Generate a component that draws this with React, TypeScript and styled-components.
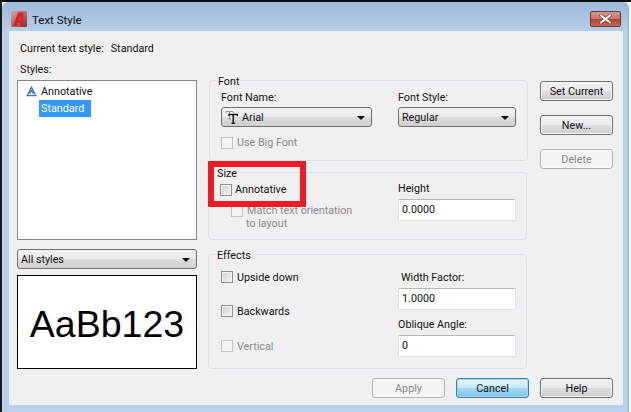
import React from 'react';
import styled, { createGlobalStyle } from 'styled-components';

const GlobalStyle = createGlobalStyle`
  html, body {
    margin: 0;
    padding: 0;
    background: #fff;
  }
  body {
    font-family: Roboto, "Liberation Sans", sans-serif;
    font-size: 10.75px;
    color: #111;
  }
`;

const Screen = styled.div`
  width: 631px;
  height: 412px;
  overflow: hidden;
  box-sizing: border-box;
  padding: 2px 2px 0 2px;
  background: linear-gradient(#0a0a0a, #0a0a0a) left top / 100% 2px no-repeat,
    linear-gradient(#1a1a1a, #1a1a1a) left top / 2px 100% no-repeat, #fff;
`;

const Win = styled.div`
  position: relative;
  height: 410px;
  box-sizing: border-box;
  padding: 0 5px 7px 7px;
  border-right: 1px solid #86b6d6;
  border-radius: 6px 6px 0 0;
  background: linear-gradient(#9cb9d9 0, #b9d1ea 32px, #b9d1ea 100%);
  display: flex;
  flex-direction: column;
`;

const TitleBar = styled.div`
  height: 29px;
  flex: none;
  display: flex;
  align-items: flex-start;
  padding: 9px 2px 0 2px;
  box-sizing: border-box;
`;

const TitleText = styled.span`
  font-size: 11.5px;
  line-height: 18px;
  margin: 0 0 0 5px;
  color: #0c0c14;
`;

const CloseBtn = styled.div`
  width: 31px;
  height: 16px;
  margin-left: auto;
  box-sizing: border-box;
  border: 1px solid #6b3a38;
  border-radius: 2px;
  background: linear-gradient(#d9978c 0, #c9756a 48%, #b4402f 52%, #c96a58 100%);
  display: flex;
  align-items: center;
  justify-content: center;
`;

const Client = styled.div`
  flex: 1;
  background: #f0f0f0;
  box-sizing: border-box;
  padding: 10px 10px 0 8px;
  display: grid;
  grid-template-columns: 180px 319px 73px;
  grid-template-rows: 14px 1fr;
  column-gap: 12px;
  row-gap: 11px;
  position: relative;
`;

const CurrentLine = styled.div`
  grid-column: 1 / 4;
  display: flex;
  gap: 7px;
  height: 14px;
  line-height: 16px;
  margin-left: 3px;
`;

const Label = styled.span<{ $disabled?: boolean; $low?: boolean }>`
  display: block;
  height: 14px;
  line-height: ${(p) => (p.$low ? '16px' : '14px')};
  white-space: nowrap;
  color: ${(p) => (p.$disabled ? '#8a8a8a' : '#111')};
`;

const LeftColumn = styled.div`
  display: flex;
  flex-direction: column;
`;

const StylesLabel = styled(Label)`
  margin: -4px 0 4px 3px;
`;

const ListBox = styled.div`
  height: 160px;
  box-sizing: border-box;
  background: #fff;
  border: 1px solid #828790;
  padding: 2px 0 0 8px;
`;

const ListRow = styled.div`
  display: flex;
  align-items: center;
  height: 17px;
`;

const RowIcon = styled.span`
  width: 13px;
  flex: none;
  display: flex;
`;

const RowText = styled.span<{ $selected?: boolean }>`
  padding: 0 ${(p) => (p.$selected ? '7px' : '0')} 0 2px;
  line-height: 17px;
  background: ${(p) => (p.$selected ? '#3399ff' : 'transparent')};
  color: ${(p) => (p.$selected ? '#fff' : '#111')};
`;

const Combo = styled.div<{ $width: number; $top?: number }>`
  width: ${(p) => p.$width}px;
  height: 20px;
  margin-top: ${(p) => p.$top ?? 0}px;
  box-sizing: border-box;
  border: 1px solid #707070;
  border-radius: 3px;
  background: linear-gradient(#f2f2f2 0, #ebebeb 48%, #dddddd 52%, #cfcfcf 100%);
  display: flex;
  align-items: center;
  padding: 1px 6px 0 3px;
  gap: 4px;
  line-height: 14px;
`;

const Arrow = styled.span`
  margin-left: auto;
  width: 0;
  height: 0;
  border-left: 4px solid transparent;
  border-right: 4px solid transparent;
  border-top: 4px solid #111;
`;

const Preview = styled.div`
  margin-top: 6px;
  height: 94px;
  box-sizing: border-box;
  padding-top: 4px;
  background: #fff;
  border: 1px solid #000;
  display: flex;
  align-items: center;
  justify-content: center;
  font-family: "Liberation Sans", Arial, sans-serif;
  font-size: 37.5px;
  color: #000;
`;

const MiddleColumn = styled.div`
  display: flex;
  flex-direction: column;
  margin-top: 14px;
`;

const Group = styled.div<{ $height: number; $gapTop?: number; $nudge?: number }>`
  height: ${(p) => p.$height}px;
  margin-top: ${(p) => p.$gapTop ?? 0}px;
  margin-left: ${(p) => p.$nudge ?? 0}px;
  margin-right: ${(p) => (p.$nudge ? 1 : 0)}px;
  box-sizing: border-box;
  border: 1px solid #d9e2ec;
  border-radius: 4px;
  display: flex;
  flex-direction: column;
`;

const Legend = styled.span`
  align-self: flex-start;
  margin: -7px 0 0 7px;
  padding: 0 1px;
  line-height: 16px;
  height: 14px;
  background: #f0f0f0;
`;

const GroupBody = styled.div<{ $top: number; $left: number; $col: number }>`
  display: grid;
  grid-template-columns: ${(p) => p.$col}px 118px;
  padding: ${(p) => p.$top}px 0 0 ${(p) => p.$left}px;
`;

const Field = styled.div`
  display: flex;
  flex-direction: column;
`;

const FieldLabel = styled(Label)<{ $shift?: number; $above?: number }>`
  margin-left: ${(p) => p.$shift ?? 0}px;
  margin-top: ${(p) => p.$above ?? 0}px;
  margin-bottom: 3px;
`;

const TextBox = styled.div`
  width: 118px;
  height: 22px;
  box-sizing: border-box;
  border: 1px solid #dfe3e8;
  border-top-color: #b5b9bd;
  border-radius: 2px;
  background: #fff;
  padding: 0 3px;
  line-height: 20px;
`;

const CheckRow = styled.div<{ $top?: number; $left?: number; $gap?: number }>`
  display: flex;
  align-items: center;
  gap: ${(p) => p.$gap ?? 4}px;
  height: 14px;
  margin-top: ${(p) => p.$top ?? 0}px;
  margin-left: ${(p) => p.$left ?? 0}px;
`;

const CheckBox = styled.span<{ $disabled?: boolean }>`
  width: 12px;
  height: 12px;
  flex: none;
  box-sizing: border-box;
  border: 1px solid ${(p) => (p.$disabled ? '#c4c4c4' : '#8e8f8f')};
  background: ${(p) =>
    p.$disabled
      ? '#f4f4f4'
      : 'linear-gradient(135deg, #cfcfcf 0, #e6e6e6 60%, #f6f6f6 100%)'};
  box-shadow: inset 0 0 0 1px #f4f4f4;
`;

const MatchText = styled.div`
  color: #8a8a8a;
  line-height: 13px;
  margin-left: 26px;
  margin-top: -1px;
`;

const RightColumn = styled.div`
  display: flex;
  flex-direction: column;
  gap: 14px;
  margin-top: 15px;
`;

const Button = styled.div<{ $variant?: 'default' | 'disabled' }>`
  width: 73px;
  height: 20px;
  box-sizing: border-box;
  border-radius: 3px;
  display: flex;
  align-items: center;
  justify-content: center;
  border: 1px solid
    ${(p) =>
      p.$variant === 'default'
        ? '#3c7fb1'
        : p.$variant === 'disabled'
          ? '#adb2b5'
          : '#707070'};
  background: ${(p) =>
    p.$variant === 'default'
      ? 'linear-gradient(#e6f5fc 0, #c8e8f8 48%, #a6d9f4 52%, #7ec4ea 100%)'
      : p.$variant === 'disabled'
        ? '#f4f4f4'
        : 'linear-gradient(#f2f2f2 0, #ebebeb 48%, #dddddd 52%, #cfcfcf 100%)'};
  box-shadow: ${(p) =>
    p.$variant === 'default' ? 'inset 0 0 0 1px #9fdcf7' : 'inset 0 0 0 1px #f8f8f8'};
  color: ${(p) => (p.$variant === 'disabled' ? '#8a8a8a' : '#111')};
`;

const BottomButtons = styled.div`
  position: absolute;
  left: 363px;
  top: 347px;
  display: flex;
  gap: 11px;
`;

const Highlight = styled.div`
  position: absolute;
  left: 199px;
  top: 130px;
  width: 98px;
  height: 46px;
  box-sizing: border-box;
  border: 6px solid #ed1c24;
  pointer-events: none;
`;

const AutoCadLogo = () => (
  <svg width="16" height="16" viewBox="0 0 16 16">
    <defs>
      <linearGradient id="tile" x1="0" y1="0" x2="1" y2="1">
        <stop offset="0" stopColor="#dba6a6" />
        <stop offset="1" stopColor="#8f2a2a" />
      </linearGradient>
    </defs>
    <rect width="16" height="16" rx="1.5" fill="url(#tile)" />
    <path d="M2 15 7.2 1.5h5V15H9.6v-3.4H6.8L5.4 15zM7.6 9.2h2V4.4z" fill="#d8202c" fillRule="evenodd" />
  </svg>
);

const AnnotativeIcon = () => (
  <svg width="11" height="11" viewBox="0 0 11 11">
    <path
      d="M5.5 1 L9.8 9.6 H1.2 Z M5.5 4 L3.5 8 M5.5 4 L7.5 8"
      fill="none"
      stroke="#3f6fa3"
      strokeWidth="1.2"
    />
  </svg>
);

const FontIcon = () => (
  <svg width="13" height="13" viewBox="0 0 13 13">
    <path d="M1 2V0.5h7V2M4.5 0.5V8M3 8h3" fill="none" stroke="#999" strokeWidth="1" />
    <path d="M4 5V3.5h8.5V5M8.2 3.5V12.3M6.5 12.5h3.6" fill="none" stroke="#111" strokeWidth="1.4" />
  </svg>
);

const CloseIcon = () => (
  <svg width="13" height="10" viewBox="0 0 13 10">
    <path
      d="M2 1.5 L11 8.5 M11 1.5 L2 8.5"
      stroke="#4a4a4a"
      strokeWidth="3.4"
      strokeLinecap="square"
    />
    <path d="M2 1.5 L11 8.5 M11 1.5 L2 8.5" stroke="#f2f2f2" strokeWidth="2" strokeLinecap="square" />
  </svg>
);

export default function App() {
  return (
    <Screen>
      <GlobalStyle />
      <Win>
        <TitleBar>
          <AutoCadLogo />
          <TitleText>Text Style</TitleText>
          <CloseBtn>
            <CloseIcon />
          </CloseBtn>
        </TitleBar>
        <Client>
          <CurrentLine>
            <span>Current text style:</span>
            <span>Standard</span>
          </CurrentLine>

          <LeftColumn>
            <StylesLabel $low>Styles:</StylesLabel>
            <ListBox>
              <ListRow>
                <RowIcon>
                  <AnnotativeIcon />
                </RowIcon>
                <RowText>Annotative</RowText>
              </ListRow>
              <ListRow>
                <RowIcon />
                <RowText $selected>Standard</RowText>
              </ListRow>
            </ListBox>
            <Combo $width={180} $top={9}>
              All styles
              <Arrow />
            </Combo>
            <Preview>AaBb123</Preview>
          </LeftColumn>

          <MiddleColumn>
            <Group $height={81}>
              <Legend>Font</Legend>
              <GroupBody $top={2} $left={11} $col={177}>
                <Field>
                  <FieldLabel $low>Font Name:</FieldLabel>
                  <Combo $width={151}>
                    <FontIcon />
                    Arial
                    <Arrow />
                  </Combo>
                </Field>
                <Field>
                  <FieldLabel $low>Font Style:</FieldLabel>
                  <Combo $width={118}>
                    Regular
                    <Arrow />
                  </Combo>
                </Field>
              </GroupBody>
              <CheckRow $top={9} $left={11}>
                <CheckBox $disabled />
                <Label $disabled>Use Big Font</Label>
              </CheckRow>
            </Group>

            <Group $height={68} $gapTop={11} $nudge={-1}>
              <Legend>Size</Legend>
              <GroupBody $top={2} $left={11} $col={178}>
                <div>
                  <CheckRow $top={1} $gap={3}>
                    <CheckBox />
                    <Label>Annotative</Label>
                  </CheckRow>
                  <CheckRow $top={7} $left={11}>
                    <CheckBox $disabled />
                    <Label $disabled>Match text orientation</Label>
                  </CheckRow>
                  <MatchText>to layout</MatchText>
                </div>
                <Field>
                  <FieldLabel>Height</FieldLabel>
                  <TextBox>0.0000</TextBox>
                </Field>
              </GroupBody>
            </Group>

            <Group $height={115} $gapTop={14} $nudge={-1}>
              <Legend>Effects</Legend>
              <GroupBody $top={9} $left={12} $col={177}>
                <div>
                  <CheckRow $top={-1}>
                    <CheckBox />
                    <Label $low>Upside down</Label>
                  </CheckRow>
                  <CheckRow $top={20}>
                    <CheckBox />
                    <Label $low>Backwards</Label>
                  </CheckRow>
                  <CheckRow $top={21}>
                    <CheckBox $disabled />
                    <Label $disabled $low>
                      Vertical
                    </Label>
                  </CheckRow>
                </div>
                <Field>
                  <FieldLabel $shift={3}>Width Factor:</FieldLabel>
                  <TextBox>1.0000</TextBox>
                  <FieldLabel $above={8}>Oblique Angle:</FieldLabel>
                  <TextBox>0</TextBox>
                </Field>
              </GroupBody>
            </Group>
          </MiddleColumn>

          <RightColumn>
            <Button>Set Current</Button>
            <Button>New...</Button>
            <Button $variant="disabled">Delete</Button>
          </RightColumn>

          <BottomButtons>
            <Button $variant="disabled">Apply</Button>
            <Button $variant="default">Cancel</Button>
            <Button>Help</Button>
          </BottomButtons>

          <Highlight />
        </Client>
      </Win>
    </Screen>
  );
}
